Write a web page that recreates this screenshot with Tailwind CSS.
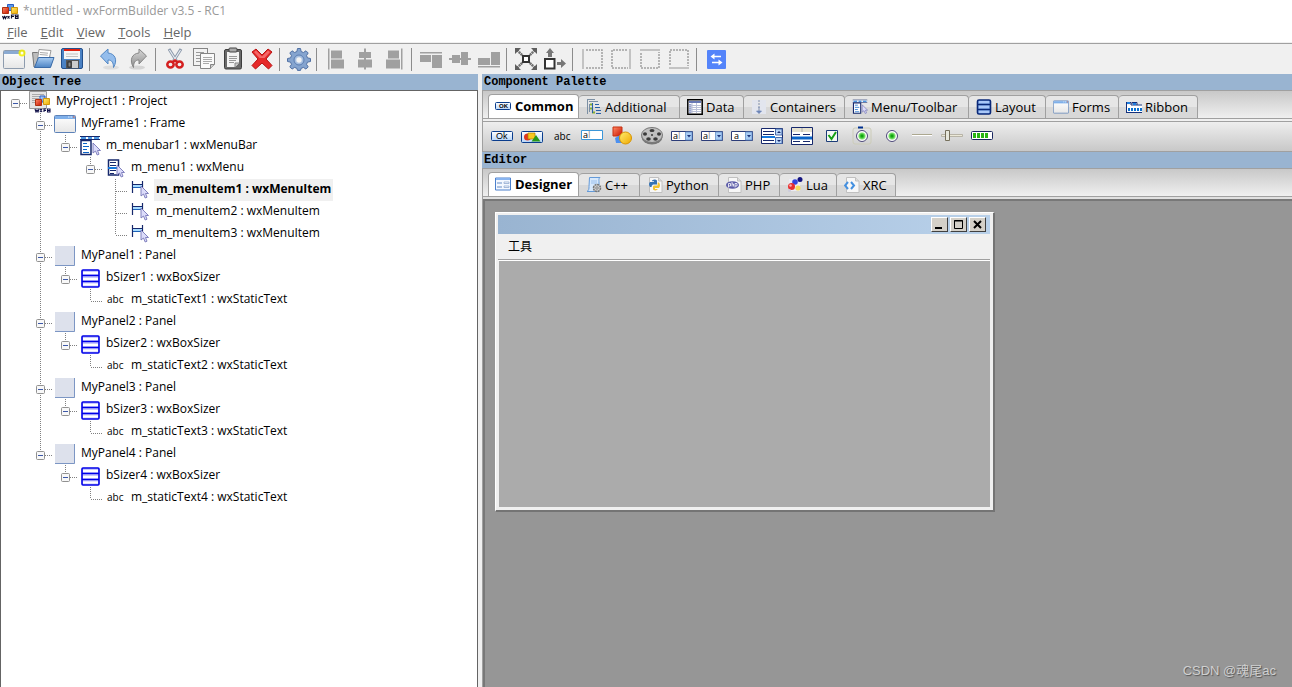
<!DOCTYPE html>
<html lang="en">
<head>
<meta charset="utf-8">
<title>*untitled - wxFormBuilder v3.5 - RC1</title>
<script src="https://cdn.jsdelivr.net/npm/@tailwindcss/browser@4"></script>
</head>
<body class="flex h-screen flex-col overflow-hidden bg-[#f0f0f0] font-['Open_Sans','Noto_Sans_CJK_SC',sans-serif] text-[13px] leading-[22px] text-black">
<svg class="absolute h-0 w-0" aria-hidden="true">
<defs>
<linearGradient id="gBlue" x2="0" y2="1"><stop stop-color="#a9cdf3"/><stop offset="1" stop-color="#4d84c4"/></linearGradient>
<linearGradient id="gGray" x2="0" y2="1"><stop stop-color="#d8d8d8"/><stop offset="1" stop-color="#8d8d8d"/></linearGradient>
<linearGradient id="gWin" x2="0" y2="1"><stop stop-color="#ffffff"/><stop offset="1" stop-color="#e6e6e6"/></linearGradient>
<linearGradient id="gRed" x2="1" y2="1"><stop stop-color="#ff8a66"/><stop offset="1" stop-color="#c81400"/></linearGradient>
<linearGradient id="gYel" x2="1" y2="1"><stop stop-color="#ffee70"/><stop offset="1" stop-color="#f0a800"/></linearGradient>
<linearGradient id="gSky" x2="1" y2="1"><stop stop-color="#c4ddff"/><stop offset="1" stop-color="#3c7ee8"/></linearGradient>
<linearGradient id="gBtn" x2="0" y2="1"><stop stop-color="#ffffff"/><stop offset="1" stop-color="#b8d6fa"/></linearGradient>
<radialGradient id="gDot"><stop stop-color="#008a00"/><stop offset=".5" stop-color="#3cc832"/><stop offset="1" stop-color="#b8f0a8"/></radialGradient>

<symbol id="logo" viewBox="0 0 17 17">
 <path d="M5.500 1.500h6v6h-6z" fill="#5a96e8" stroke="#2a5ec0"/><path d="M.5 4.500h6v6h-6z" fill="url(#gRed)" stroke="#b03010"/><path d="M9.500 4.500h6v6h-6z" fill="url(#gYel)" stroke="#d09810"/>
 <path d="M.5 13l1 2.500 1-2 1 2 1-2.500M5.500 13l2 2.500M7.500 13l-2 2.500M9.500 15.500v-3.500h3M9.500 13.500h2.500M13.500 12v3.500h2.500v-3.500zM13.500 13.700h2.500" fill="none" stroke="#101030" stroke-width="1.200"/>
</symbol>
<symbol id="window" viewBox="0 0 22 20">
 <rect x=".5" y="1.500" width="21" height="17" rx="1" fill="url(#gWin)" stroke="#5d82b8"/><rect x="1" y="2" width="20" height="3" fill="#7fb0ea"/><path d="M14 3h1.500M16.500 3h1.500" stroke="#dcecff"/><path d="M19 3h1.500" stroke="#e85020"/>
</symbol>
<symbol id="new" viewBox="0 0 24 24">
 <rect x="1.500" y="3.500" width="21" height="18" rx="1" fill="url(#gWin)" stroke="#8e9cae"/><rect x="2" y="4" width="20" height="3" fill="#8aaad2"/><circle cx="20" cy="6" r="3.500" fill="#f4f000" fill-opacity=".85"/><circle cx="20" cy="6" r="1.500" fill="#fffff0"/>
</symbol>
<symbol id="open" viewBox="0 0 24 24">
 <path d="M3 20L1.500 5.500h5l2 2h10l1 12z" fill="#bdbdbd" stroke="#777"/><path d="M6.500 12l1.500-9.500 12 1-2 9z" fill="#fff" stroke="#999"/><path d="M9 5.500l8 .7M8.700 7.500l8 .7" stroke="#aaa"/><path d="M3.500 20.500l4-10h15.500l-3.500 10z" fill="url(#gBlue)" stroke="#3a6ba8"/>
</symbol>
<symbol id="save" viewBox="0 0 24 24">
 <rect x="1.500" y="1.500" width="21" height="20" rx="1.500" fill="#4b82c4" stroke="#24508c"/><rect x="4" y="2" width="16" height="10" fill="#f6f6f6"/><path d="M4 3h16" stroke="#e02010" stroke-width="2"/><path d="M6 7h12M6 9.500h12" stroke="#c2c2c2"/><rect x="6" y="13" width="13" height="8.500" fill="#555"/><rect x="12" y="14" width="6" height="7" fill="#ccc"/><rect x="8" y="15" width="3" height="5" fill="#888" stroke="#222" stroke-width=".8"/>
</symbol>
<symbol id="undo" viewBox="0 0 24 24"><ellipse cx="14" cy="20.500" rx="8" ry="2" fill="#ddd"/><path d="M3.500 9L11 2v4c7 .5 10 7 5.500 14.500 0-5-1.500-7.500-5.500-7.500v4z" fill="#94bdec" stroke="#5287c4"/></symbol>
<symbol id="redo" viewBox="0 0 24 24"><ellipse cx="11" cy="20.500" rx="8" ry="2" fill="#d4d4d4"/><path d="M20.500 9L13 2v4c-7 .5-10 7-5.500 14.500 0-5 1.500-7.500 5.500-7.500v4z" fill="url(#gGray)" stroke="#868686"/></symbol>
<symbol id="cut" viewBox="0 0 24 24"><path d="M6 2l7.500 12M18 2l-7.500 12" stroke="#8b98aa" stroke-width="3"/><path d="M6.500 3l7 11M17.500 3l-7 11" stroke="#e8edf3" stroke-width="1.200"/><g fill="none" stroke="#d42020" stroke-width="2.500"><ellipse cx="7.500" cy="17.500" rx="3.200" ry="3"/><ellipse cx="16.500" cy="17.500" rx="3.200" ry="3"/><path d="M9 15.500l3-2 3 2"/></g></symbol>
<symbol id="copy" viewBox="0 0 24 24"><rect x="1.500" y="1.500" width="14" height="17" fill="#f2f2f2" stroke="#858585"/><path d="M4 5.500h8M4 8.500h4M4 11.500h4M4 14.500h4" stroke="#999"/><path d="M8.500 6.500h14v11l-4 4h-10z" fill="#fafafa" stroke="#858585"/><path d="M11 10.500h9M11 12.500h9M11 14.500h9M11 16.500h6" stroke="#aaa"/><path d="M18.500 21.500v-4h4" fill="#ccc" stroke="#858585"/></symbol>
<symbol id="paste" viewBox="0 0 24 24"><rect x="3.500" y="2.500" width="17" height="19.500" rx="1.500" fill="#6a6a6a" stroke="#3e3e3e"/><path d="M6 5h12v11l-4 4H6z" fill="#f4f4f4"/><rect x="8" y="1" width="8" height="4" rx="1" fill="#aaa" stroke="#444"/><path d="M8 9.500h8M8 11.500h8M8 13.500h7M8 15.500h5" stroke="#999"/><path d="M14 20v-4h4" fill="#ccc" stroke="#888"/></symbol>
<symbol id="delete" viewBox="0 0 24 24"><path d="M2 5l4-3 6 6 6-6 4 3-6 7 6 6.500-3.500 3.500L12 16l-6.500 6L2 18.500 8 12z" fill="#e62a2a" stroke="#b81212"/><path d="M4 5l2-1.500 6 6 6-6L20 5l-5.500 6h-5z" fill="#ff9292" fill-opacity=".6"/></symbol>
<symbol id="gear" viewBox="0 0 24 24"><path d="M10.500 1.500h3l.6 3 2.300 1 2.600-1.700 2.200 2.200L19.500 8.600l1 2.300 3 .6v3l-3 .6-1 2.200 1.700 2.600-2.200 2.200-2.600-1.700-2.300 1-.6 2h-3l-.6-2-2.300-1L5 22.100l-2.200-2.200 1.700-2.600-1-2.200-3-.6v-3l3-.6 1-2.300L2.800 6 5 3.800l2.600 1.700 2.300-1z" fill="#85a4cf" stroke="#5070a4"/><circle cx="12" cy="13" r="5" fill="#a6bfe0" stroke="#5b7db2"/><circle cx="12" cy="13" r="2.700" fill="#f2f2f2"/></symbol>
<symbol id="alL" viewBox="0 0 24 24"><path d="M4 1.500h1.500v21H4zM7 3.500h11v8H7zM7 12.500h13v9H7z" fill="#a0a0a0"/></symbol>
<symbol id="alC" viewBox="0 0 24 24"><path d="M11 1.500h2v21h-2zM6 5h12v6H6zM5 12.500h14v8H5z" fill="#a0a0a0"/></symbol>
<symbol id="alR" viewBox="0 0 24 24"><path d="M19 1.500h1.500v21H19zM6 3.500h11v8H6zM4 12.500h14v9H4z" fill="#a0a0a0"/></symbol>
<symbol id="alT" viewBox="0 0 24 24"><path d="M1 5h22v1.500H1zM1 8h11v7H1zM13 8h10v13H13z" fill="#a0a0a0"/></symbol>
<symbol id="alM" viewBox="0 0 24 24"><path d="M1 11h22v2H1zM4 8h8v8H4zM13 5h7v13h-7z" fill="#a0a0a0"/></symbol>
<symbol id="alB" viewBox="0 0 24 24"><path d="M1 19h22v1.500H1zM1 11h12v7H1zM14 5h9v13h-9z" fill="#a0a0a0"/></symbol>
<symbol id="expand" viewBox="0 0 24 24"><path d="M3 3l18 18M21 3L3 21" stroke="#707070" stroke-width="2.500" stroke-dasharray="2 .6"/><path d="M1 1h6L1 7zM23 1h-6l6 6zM1 23h6l-6-6zM23 23h-6l6-6z" fill="#5e5e5e"/><rect x="8" y="8" width="8" height="8" fill="#f0f0f0"/><rect x="9" y="9" width="6" height="6" fill="#fff" stroke="#333" stroke-width="2"/></symbol>
<symbol id="stretch" viewBox="0 0 24 24"><rect x="2" y="12" width="9.500" height="9.500" fill="#fff" stroke="#333" stroke-width="2"/><path d="M5 10V6H3l4-5 4 5H9v4zM14 15h4v-3l5 4.500-5 4.500v-3h-4z" fill="#777"/></symbol>
<symbol id="bL" viewBox="0 0 24 24"><path d="M3 2v20" stroke="#969696" stroke-width="1"/><path d="M6 3h16v18H5" fill="none" stroke="#a0a0a0" stroke-width="1.500" stroke-dasharray="2 1"/></symbol>
<symbol id="bR" viewBox="0 0 24 24"><path d="M21 2v20" stroke="#969696" stroke-width="1"/><path d="M18 3H3v18h16" fill="none" stroke="#a0a0a0" stroke-width="1.500" stroke-dasharray="2 1"/></symbol>
<symbol id="bT" viewBox="0 0 24 24"><path d="M2 3h20" stroke="#969696" stroke-width="1"/><path d="M3 6v15h18V5" fill="none" stroke="#a0a0a0" stroke-width="1.500" stroke-dasharray="2 1"/></symbol>
<symbol id="bB" viewBox="0 0 24 24"><path d="M2 21h20" stroke="#969696" stroke-width="1"/><path d="M3 18V3h18v16" fill="none" stroke="#a0a0a0" stroke-width="1.500" stroke-dasharray="2 1"/></symbol>
<symbol id="swap" viewBox="0 0 24 24"><rect x="3" y="3" width="19" height="19" rx="1" fill="#5484fa"/><path d="M9 9.500h8M8 15.500h8" stroke="#fff" stroke-width="1.500"/><path d="M10.500 6.500v6l-4-3zM14.500 12.500v6l4-3z" fill="#fff"/></symbol>

<symbol id="project" viewBox="0 0 22 22">
 <path d="M.5.500h17v17H.5z" fill="#e4e4e4" stroke="#999"/><path d="M3 3.500h12M3 5.500h11M3 7.500h7M3 9.500h5M3 11.500h4" stroke="#aaa"/>
 <path d="M11 5h5v6h-5z" fill="url(#gSky)" stroke="#2a5ec0"/><path d="M6.500 8.500h6v6h-6z" fill="url(#gRed)" stroke="#b03010"/><path d="M14.500 7.500h6v6h-6z" fill="url(#gYel)" stroke="#d09810"/>
 <path d="M6 18l1 3 1-2 1 2 1-3M11 18l2 3M13 18l-2 3M15 21v-3h2M15 19.500h2M18.500 18v3h2.500v-3zM18 19.500h3" fill="none" stroke="#101048" stroke-width="1.100"/>
</symbol>
<symbol id="cursor" viewBox="0 0 9 14"><path d="M1 1v10l2.500-2 1.700 4 1.800-.8L5.500 8.500H8.500z" fill="#dcdcfa" stroke="#7676b8" stroke-width=".9"/></symbol>
<symbol id="menubar" viewBox="0 0 22 22"><path d="M1 1.500h20M1 4.500h20" stroke="#16286c"/><path d="M1 3h20" stroke="#fff" stroke-width="2"/><path d="M2 3h5M9 3h4M15 3h5" stroke="#1478dc" stroke-width="1.500"/><path d="M2 5.500h10v14H2z" fill="#fff" stroke="#16286c" stroke-width="1.500"/><path d="M4 8.500h4M4 11.500h6M4 14.500h4M4 17.500h6" stroke="#0a64c8"/><use href="#cursor" x="13" y="7" width="9" height="14"/></symbol>
<symbol id="menu" viewBox="0 0 22 22"><path d="M4.500 3h10v15h-10z" fill="#fff" stroke="#16286c" stroke-width="1.500"/><path d="M6 5.500h6M6 8.500h6M6 13.500h6M6 16.500h4" stroke="#16286c"/><path d="M4 11h11" stroke="#1478dc" stroke-width="2"/><use href="#cursor" x="12" y="7" width="9" height="14"/></symbol>
<symbol id="item" viewBox="0 0 22 22"><path d="M3.500 2v12M13.500 2v8" stroke="#16286c" stroke-width="1.200"/><path d="M4 5.500h9" stroke="#16286c"/><path d="M4 8.500h9" stroke="#1e62b8"/><path d="M4 7h9" stroke="#a8dcff" stroke-width="2"/><use href="#cursor" x="11" y="6" width="9" height="14"/></symbol>
<symbol id="panel" viewBox="0 0 22 22"><path d="M1 1h20v20H1z" fill="#dde1ec"/><path d="M20.500 1v19.500H1" fill="none" stroke="#7c96c4"/></symbol>
<symbol id="sizer" viewBox="0 0 22 22"><rect x="3" y="3" width="17" height="17" rx="1" fill="#c8c8ff" stroke="#0000e8" stroke-width="1.600"/><path d="M3 8.500h17M3 14.500h17" stroke="#0000e8" stroke-width="1.500"/><path d="M4 6h15M4 12h15M4 17.500h15" stroke="#fff" stroke-width="2"/></symbol>
<symbol id="layout" viewBox="0 0 16 16"><rect x="1.500" y="1" width="13" height="14" rx="1.500" fill="#8cb4f0" stroke="#0a2878" stroke-width="1.600"/><path d="M2 5.500h12M2 10.500h12" stroke="#0a2878" stroke-width="1.600"/><path d="M3 3h10M3 8h10M3 13h10" stroke="#c8dcff"/></symbol>

<symbol id="additional" viewBox="0 0 16 16"><path d="M1 .5h8M1.500 1v14M3 2.500h9M3.500 5v8" stroke="#7c90a4"/><path d="M4 5.500h3M4 9.500h3M6 13.500h3" stroke="#88b030" stroke-width="2"/><path d="M6.500 4v10M9 5.500h4M9 8.500h5M10 11.500h5M10 14.500h5" stroke="#2860a8" stroke-width="1.100"/></symbol>
<symbol id="data" viewBox="0 0 16 16"><path d="M.8.800h14.400v14.400H.8z" fill="#fff" stroke="#000" stroke-width="1.500"/><path d="M2 2h12v2H2z" fill="#6878b4"/><path d="M2 5h2.500v9H2z" fill="#98a4d0"/><path d="M5 4v10M9.500 4v10M2 6.500h12M2 8.500h12M2 10.500h12M2 12.500h12" stroke="#bac0d8"/></symbol>
<symbol id="containers" viewBox="0 0 16 16"><path d="M1 1h6v14H1zM9 1h6v14H9z" fill="#e2e5ee"/><path d="M8 1v9" stroke="#8090b0" stroke-dasharray="2 1"/><path d="M8 8v5M5.500 12h5L8 14.500z" stroke="#6c84b8" fill="#6c84b8" stroke-width=".7"/></symbol>
<symbol id="ribbon" viewBox="0 0 16 16"><path d="M0 5.500h16v8H0z" fill="#fff"/><path d="M0 3.500h5V6h11M1 13.500h15M.5 4v10M6 5V3.500h5V6" fill="none" stroke="#14307c"/><path d="M1 4h3M7 5h3" stroke="#2080e0" stroke-width="2"/><path d="M2 9h2v3H2zM5 9h2v3H5zM8 9h2v3H8zM11 9h2v3h-2zM14 9h2v3h-2z" fill="#0a70d0"/></symbol>
<symbol id="designer" viewBox="0 0 16 16"><path d="M.5 2h15v12H.5z" fill="#f4f8ff" stroke="#4c80cc"/><path d="M1 3h14" stroke="#88b4f0" stroke-width="2"/><path d="M2 7h5M2 11h5" stroke="#668cc4"/><path d="M9 6h5v1.500H9zM9 10h5v1.500H9z" fill="#fff" stroke="#90a8d0" stroke-width=".8"/></symbol>
<symbol id="cpp" viewBox="0 0 16 16"><path d="M3.500.500H14c-1.500 1-1 3-1 4v10H1c2-1 2-3 2-5z" fill="#d6e8fc" stroke="#649ad8"/><path d="M5 4h6M5 6h6" stroke="#9cc0ec"/><circle cx="11" cy="11" r="3.500" fill="#d0d0d0" stroke="#777" stroke-width="1.500" stroke-dasharray="2 .7"/><circle cx="11" cy="11" r="1.200" fill="#fff" stroke="#777"/></symbol>
<symbol id="page" viewBox="0 0 16 16"><path d="M2.500.500h9l3.500 3.500v11.500H2.500z" fill="#f7f7f7" stroke="#c0c0c0"/><path d="M11.500.500V4H15" fill="#ddd" stroke="#c0c0c0"/></symbol>
<symbol id="python" viewBox="0 0 16 16"><use href="#page"/><path d="M5 3.500q3-1.800 5 0v4H6q-1.500.5-1.500 2.500H3q-2-3 0-5h4v-.7H5z" fill="#3674b4"/><path d="M10.700 5.500H12q2 3 0 5.500H8v1h3q-2 2.500-5 .5V9.500q.5-1 1.500-1h3z" fill="#f4c430"/></symbol>
<symbol id="php" viewBox="0 0 16 16"><use href="#page"/><ellipse cx="6.500" cy="8" rx="6.500" ry="3.800" fill="#5c5ca8"/><path d="M2.500 10.500V6.500h2V9h-2M6 5v4.500M6 7h1.500v2.500M9 10.500V6.500h2V9H9" fill="none" stroke="#fff" stroke-width=".8"/></symbol>
<symbol id="lua" viewBox="0 0 16 16"><path d="M2 2h11v12H2z" fill="#ececf4"/><circle cx="13" cy="2.500" r="2.500" fill="#141480"/><circle cx="8" cy="5" r="2.800" fill="#3444dc"/><circle cx="4.500" cy="9.500" r="3.500" fill="#e83030"/><circle cx="3.500" cy="8.500" r="1.300" fill="#ffb0b0"/><circle cx="11" cy="11" r="2.600" fill="#f4dc60"/><circle cx="2.500" cy="13.500" r="1.500" fill="#ccd"/></symbol>
<symbol id="xrc" viewBox="0 0 16 16"><use href="#page"/><path d="M4 5L1 8.500l3 3.500M7 5l3 3.500-3 3.500" fill="none" stroke="#4490e0" stroke-width="2"/></symbol>

<symbol id="okbtn" viewBox="0 0 24 24"><rect x="1.500" y="7.500" width="21" height="9" rx="1" fill="url(#gBtn)" stroke="#0a3c8c"/></symbol>
<symbol id="okmini" viewBox="0 0 16 16"><rect x=".5" y="4.500" width="15" height="7" rx="1" fill="url(#gBtn)" stroke="#0a3c8c"/></symbol>
<symbol id="bmpbtn" viewBox="0 0 24 24"><rect x="1.500" y="7.500" width="21" height="11" rx="1" fill="url(#gBtn)" stroke="#0a3c8c"/><circle cx="7.500" cy="13" r="3.500" fill="#e03820"/><path d="M8 9h7v6H8z" fill="#f8c820" stroke="#b08000" stroke-width=".7"/><path d="M16 11l4.500 6.500h-9z" fill="#289818"/></symbol>
<symbol id="txtbox" viewBox="0 0 24 24"><path d="M1.500 6.500h21v9h-21z" fill="#fff" stroke="#3a96d8"/></symbol>
<symbol id="shapes" viewBox="0 0 24 24"><path d="M3 3h9v9H3z" fill="url(#gRed)" stroke="#c83010"/><path d="M5 14l5-3 5 8H6z" fill="#4c90f0"/><circle cx="15.500" cy="14" r="6" fill="url(#gYel)" stroke="#d89400"/></symbol>
<symbol id="reel" viewBox="0 0 24 24"><ellipse cx="12" cy="13" rx="10.500" ry="7.500" fill="#777"/><ellipse cx="12" cy="11" rx="10.500" ry="7.500" fill="#c0c0c0" stroke="#777"/><g fill="#3a3a3a"><ellipse cx="12" cy="6.500" rx="2.500" ry="1.500"/><ellipse cx="5" cy="10" rx="2" ry="1.700"/><ellipse cx="19" cy="10" rx="2" ry="1.700"/><ellipse cx="8.500" cy="15" rx="2.300" ry="1.700"/><ellipse cx="15.500" cy="15" rx="2.300" ry="1.700"/><circle cx="12" cy="11" r="1"/></g></symbol>
<symbol id="combo" viewBox="0 0 24 24"><path d="M1.500 7.500h21v9h-21z" fill="#fff" stroke="#2c3c78"/><path d="M15.500 8h6.500v8h-6.500z" fill="#a8ccf4" stroke="#6490c8" stroke-width=".8"/><path d="M17 11h4l-2 2.500z" fill="#1c3478"/></symbol>
<symbol id="listbox" viewBox="0 0 24 24"><path d="M1.500 4.500h21v15h-21z" fill="#fff" stroke="#16286c"/><path d="M3 7.500h11M3 10.500h11M3 16.500h11" stroke="#16286c"/><path d="M2 13h13" stroke="#1478dc" stroke-width="2"/><path d="M15.500 5h6.500v6h-6.500zM15.500 13.500h6.500v6h-6.500z" fill="#bcd8f8" stroke="#486cac"/><path d="M17 9l2-2 2 2zM17 16l2 2 2-2z" fill="#16286c"/></symbol>
<symbol id="listctrl" viewBox="0 0 24 24"><path d="M1.500 3.500h21v17h-21z" fill="#fff" stroke="#16286c"/><path d="M2 4h20v4H2z" fill="#e6e2d0"/><path d="M12 4v4" stroke="#aaa"/><path d="M3 10.500h7M13 10.500h7M3 17.500h7M13 17.500h7" stroke="#16286c"/><path d="M2 14h20" stroke="#0a64c8" stroke-width="3"/></symbol>
<symbol id="check" viewBox="0 0 24 24"><path d="M6.500 6.500h11v11h-11z" fill="#f4f8f4" stroke="#1c3c78"/><path d="M8.500 11l3 4 4.500-7" fill="none" stroke="#14a014" stroke-width="2"/></symbol>
<symbol id="radio" viewBox="0 0 24 24"><circle cx="12" cy="12" r="5.500" fill="#fff" stroke="#4c4878"/><circle cx="12" cy="12" r="3.800" fill="url(#gDot)"/></symbol>
<symbol id="radiobox" viewBox="0 0 24 24"><rect x="3" y="4" width="18" height="16" rx="2" fill="none" stroke="#ccccb8"/><path d="M8 3.500h5" stroke="#003090" stroke-width="2"/><use href="#radio"/></symbol>
<symbol id="line" viewBox="0 0 24 24"><path d="M2 10.500h20" stroke="#aca890"/><path d="M2 11.500h20" stroke="#fff"/></symbol>
<symbol id="slider" viewBox="0 0 24 24"><path d="M1.500 10.500h21v2h-21z" fill="#ece9d8" stroke="#aca899" stroke-width=".8"/><path d="M5.500 6.500h4v10h-4z" fill="#e8e8dc" stroke="#76705c"/></symbol>
<symbol id="gauge" viewBox="0 0 24 24"><rect x="1.500" y="7.500" width="21" height="8" rx="1" fill="#fff" stroke="#1c2860"/><path d="M3 9h3v5H3zM7 9h3v5H7zM11 9h3v5h-3zM15 9h3v5h-3z" fill="#28b414"/></symbol>

<symbol id="box" viewBox="0 0 9 9"><rect x=".5" y=".5" width="8" height="8" rx="1" fill="#f8f8f8" stroke="#919191"/><path d="M2 4.500h5" stroke="#3c58a8"/></symbol>
</defs>
</svg>

<header class="bg-white text-[#999]">
 <div class="flex h-[22px] items-center gap-1 pl-0.5">
  <svg class="size-[17px]"><use href="#logo"/></svg>
  <h1 class="text-[12px]">*untitled - wxFormBuilder v3.5 - RC1</h1>
 </div>
 <nav class="flex h-5 items-center gap-[13px] pl-[7px] leading-5 text-[#666]">
  <button><u>F</u>ile</button><button><u>E</u>dit</button><button><u>V</u>iew</button><button><u>T</u>ools</button><button><u>H</u>elp</button>
 </nav>
</header>
<div id="toolbar" class="mt-px flex h-[31px] shrink-0 items-center border-t border-[#a0a0a0]"></div>

<main class="flex min-h-0 flex-1 gap-1">
 <section class="flex w-[478px] shrink-0 flex-col">
  <h2 class="h-4 bg-[#99b4d1] pl-0.5 font-['Liberation_Mono',monospace] text-[12px] leading-4 font-bold">Object Tree</h2>
  <ul id="tree" class="flex-1 border border-b-0 border-[#646464] bg-white pl-0.5 text-[12px]"></ul>
 </section>

 <div class="flex min-w-0 flex-1 flex-col">
  <section>
   <h2 class="h-4 bg-[#99b4d1] pl-0.5 font-['Liberation_Mono',monospace] text-[12px] leading-4 font-bold">Component Palette</h2>
   <div class="border-y border-l border-[#a0a0a0]">
    <div id="paletteTabs" class="flex h-[28px] items-end border-b border-[#a0a0a0] bg-linear-to-b from-[#c8c8c8] to-[#f0f0f0] pl-[5px] leading-5"></div>
    <div class="h-0.5 bg-[#f0f0f0]"></div>
    <div id="palette" class="flex h-[30px] items-start border-t border-[#a0a0a0] bg-linear-to-b from-[#eeeeee] to-[#c8c8c8] pt-0.5 pl-1"></div>
   </div>
  </section>
  <section class="flex min-h-0 flex-1 flex-col">
   <h2 class="h-4 bg-[#99b4d1] pl-0.5 font-['Liberation_Mono',monospace] text-[12px] leading-4 font-bold">Editor</h2>
   <div class="flex min-h-0 flex-1 flex-col border-t border-l border-[#a0a0a0]">
    <div id="editorTabs" class="flex h-[28px] shrink-0 items-end border-b border-[#a0a0a0] bg-linear-to-b from-[#c8c8c8] to-[#f0f0f0] pl-[5px] leading-5"></div>
    <div class="h-0.5 shrink-0 bg-[#e0e0e0]"></div>
    <div class="min-h-0 flex-1 border-t-2 border-l-2 border-t-[#787878] border-l-[#787878] bg-[#969696] pt-[11px] pl-[10px]">
     <div class="flex h-[300px] w-[500px] flex-col border-t border-r-2 border-b-2 border-l border-t-white border-r-[#747474] border-b-[#747474] border-l-white bg-[#f0f0f0] p-0.5 pr-[3px] pb-[3px]">
      <div class="flex h-[19px] items-center justify-end gap-0.5 bg-linear-to-r from-[#99b4d1] to-[#b9d1ea] pr-1">
       <button aria-label="Minimize" class="h-[15px] w-[17px] border border-t-white border-r-[#404040] border-b-[#404040] border-l-white bg-[#d4d0c8]"><svg class="size-full" viewBox="0 0 15 13"><path d="M3 10h7" stroke="#000" stroke-width="2"/></svg></button>
       <button aria-label="Maximize" class="h-[15px] w-[17px] border border-t-white border-r-[#404040] border-b-[#404040] border-l-white bg-[#d4d0c8]"><svg class="size-full" viewBox="0 0 15 13"><path d="M3.500 2.500h8v8h-8zM3 3h9" fill="none" stroke="#000"/></svg></button>
       <button aria-label="Close" class="h-[15px] w-[17px] border border-t-white border-r-[#404040] border-b-[#404040] border-l-white bg-[#d4d0c8]"><svg class="size-full" viewBox="0 0 15 13"><path d="M4 3l7 7M11 3l-7 7" stroke="#000" stroke-width="2"/></svg></button>
      </div>
      <div class="flex h-[26px] items-center border-b border-[#a0a0a0] px-2.5 text-[12px]"><button>工具</button></div>
      <div class="flex-1 border-t border-l border-t-white border-l-[#f0f0f0] bg-[#ababab]"></div>
     </div>
    </div>
   </div>
  </section>
 </div>
</main>
<p class="absolute right-4 bottom-1.5 font-['Liberation_Sans','Noto_Sans_CJK_SC',sans-serif] text-[13px] leading-5 text-[#d0d0d0] [text-shadow:1px_1px_1px_#555]">CSDN @魂尾ac</p>

<script>
const icon = (id, cls) => `<svg class="${cls}"><use href="#${id}"/></svg>`;

const tools = ['new:New','open:Open','save:Save','|','undo:Undo','redo:Redo','|','cut:Cut','copy:Copy','paste:Paste','delete:Delete','|','gear:Generate Code','|','alL:Align Left','alC:Align Center','alR:Align Right','|','alT:Align Top','alM:Align Middle','alB:Align Bottom','|','expand:Expand','stretch:Stretch','|','bL:Left Border','bR:Right Border','bT:Top Border','bB:Bottom Border','|','swap:Swap'];
document.getElementById('toolbar').innerHTML = tools.map(t => {
  if (t === '|') return '<span class="mr-[5px] ml-0.5 h-[23px] w-px bg-[#8c8c8c]"></span>';
  const [id, name] = t.split(':');
  return `<button class="flex w-[29px] pl-0.5" aria-label="${name}">${icon(id, 'size-6')}</button>`;
}).join('');

const tab = ([name, id, width], i) => i === 0
  ? `<button class="flex h-6 items-center gap-1 rounded-t border-x border-t border-[#a0a0a0] bg-white pb-0.5 pl-1.5 font-bold" style="width:${width}px">${id === 'okmini' ? `<svg class="size-4 shrink-0" viewBox="0 0 16 16"><use href="#okmini"/><text x="4" y="10" font-size="6" font-family="Liberation Sans">OK</text></svg>` : icon(id, 'size-4 shrink-0')}${name}</button>`
  : `<button class="flex h-[23px] items-center gap-[3px] rounded-t border-r border-t border-[#a0a0a0] bg-linear-to-b from-[#e6e6e6] from-50% to-[#d8d8d8] to-50% pb-px pl-[7px]" style="width:${width}px">${icon(id, 'size-4 shrink-0')}${name}</button>`;
document.getElementById('paletteTabs').innerHTML = [['Common','okmini',91],['Additional','additional',101],['Data','data',64],['Containers','containers',101],['Menu/Toolbar','menubar',124],['Layout','layout',77],['Forms','window',73],['Ribbon','ribbon',79]].map(tab).join('');
document.getElementById('editorTabs').innerHTML = [['Designer','designer',91],['C++','cpp',61],['Python','python',79],['PHP','php',61],['Lua','lua',57],['XRC','xrc',59]].map(tab).join('');

const captions = {
  okbtn: '<text x="6" y="15" font-size="9" font-family="Liberation Sans">Ok</text>',
  label: '<text x="4" y="16" font-size="10" font-family="Open Sans">abc</text>',
  txtbox: '<text x="3" y="14" font-size="9" font-family="Open Sans">a<tspan fill="#888">I</tspan></text>',
  combo: '<text x="3" y="15" font-size="9" font-family="Open Sans">a<tspan fill="#888">I</tspan></text>',
  choice: '<text x="4" y="15" font-size="9" font-family="Open Sans">a</text>'
};
const widgets = [['okbtn','okbtn','Button'],['bmpbtn','','Bitmap Button'],['','label','Static Text'],['txtbox','txtbox','Text Control'],['shapes','','Static Bitmap'],['reel','','Animation'],['combo','combo','Combo Box'],['combo','combo','Bitmap Combo Box'],['combo','choice','Choice'],['listbox','','List Box'],['listctrl','','List Control'],['check','','Check Box'],['radiobox','','Radio Box'],['radio','','Radio Button'],['line','','Static Line'],['slider','','Slider'],['gauge','','Gauge']];
document.getElementById('palette').innerHTML = widgets.map(([id, cap, name]) =>
  `<button class="flex w-[30px] justify-center" aria-label="${name}"><svg class="size-6" viewBox="0 0 24 24">${id ? `<use href="#${id}"/>` : ''}${captions[cap] || ''}</svg></button>`).join('');

/* Each row: guides string, one character per indent level.
   space: blank, v: passing line, t: tee, e: last child, r: root; upper case adds an expander. */
const rows = [['R','project','MyProject1 : Project'],[' T','window','MyFrame1 : Frame'],[' vE','menubar','m_menubar1 : wxMenuBar'],[' v E','menu','m_menu1 : wxMenu'],[' v  t','item','m_menuItem1 : wxMenuItem'],[' v  t','item','m_menuItem2 : wxMenuItem'],[' v  e','item','m_menuItem3 : wxMenuItem']];
for (let n = 1; n <= 4; n++) {
  const v = n < 4 ? 'v' : ' ';
  rows.push([n < 4 ? ' T' : ' E', 'panel', `MyPanel${n} : Panel`], [` ${v}E`, 'sizer', `bSizer${n} : wxBoxSizer`], [` ${v} e`, 'abc', `m_staticText${n} : wxStaticText`]);
}
const guide = c => {
  if (c === ' ') return '<span class="w-[25px]"></span>';
  const k = c.toLowerCase();
  const vert = k === 'v' || k === 't' ? 'M12.500 0v22' : k === 'e' ? 'M12.500 0v12' : '';
  const horiz = k === 'v' ? '' : 'M13 12.500h12';
  const art = `<svg class="h-[22px] w-[25px]" viewBox="0 0 25 22"><path d="${vert}${horiz}" stroke="#808080" stroke-dasharray="1 1"/>${c !== k ? '<use href="#box" x="8" y="8" width="9" height="9"/>' : ''}</svg>`;
  return c !== k ? `<button aria-label="Collapse">${art}</button>` : `<span>${art}</span>`;
};
document.getElementById('tree').innerHTML = rows.map(([guides, id, text], i) => {
  const art = id === 'abc' ? '<svg class="size-[22px]" viewBox="0 0 22 22"><text x="3" y="14" font-size="10" font-family="Open Sans">abc</text></svg>' : icon(id, 'size-[22px]');
  return `<li class="flex h-[22px] items-center">${[...guides].map(guide).join('')}<span class="w-[26px] pl-px">${art}</span><span class="${i === 4 ? 'bg-[#f0f0f0] px-0.5 pb-0.5 leading-5 font-bold' : 'px-0.5 pb-0.5 leading-5'}">${text}</span></li>`;
}).join('');
</script>
</body>
</html>
